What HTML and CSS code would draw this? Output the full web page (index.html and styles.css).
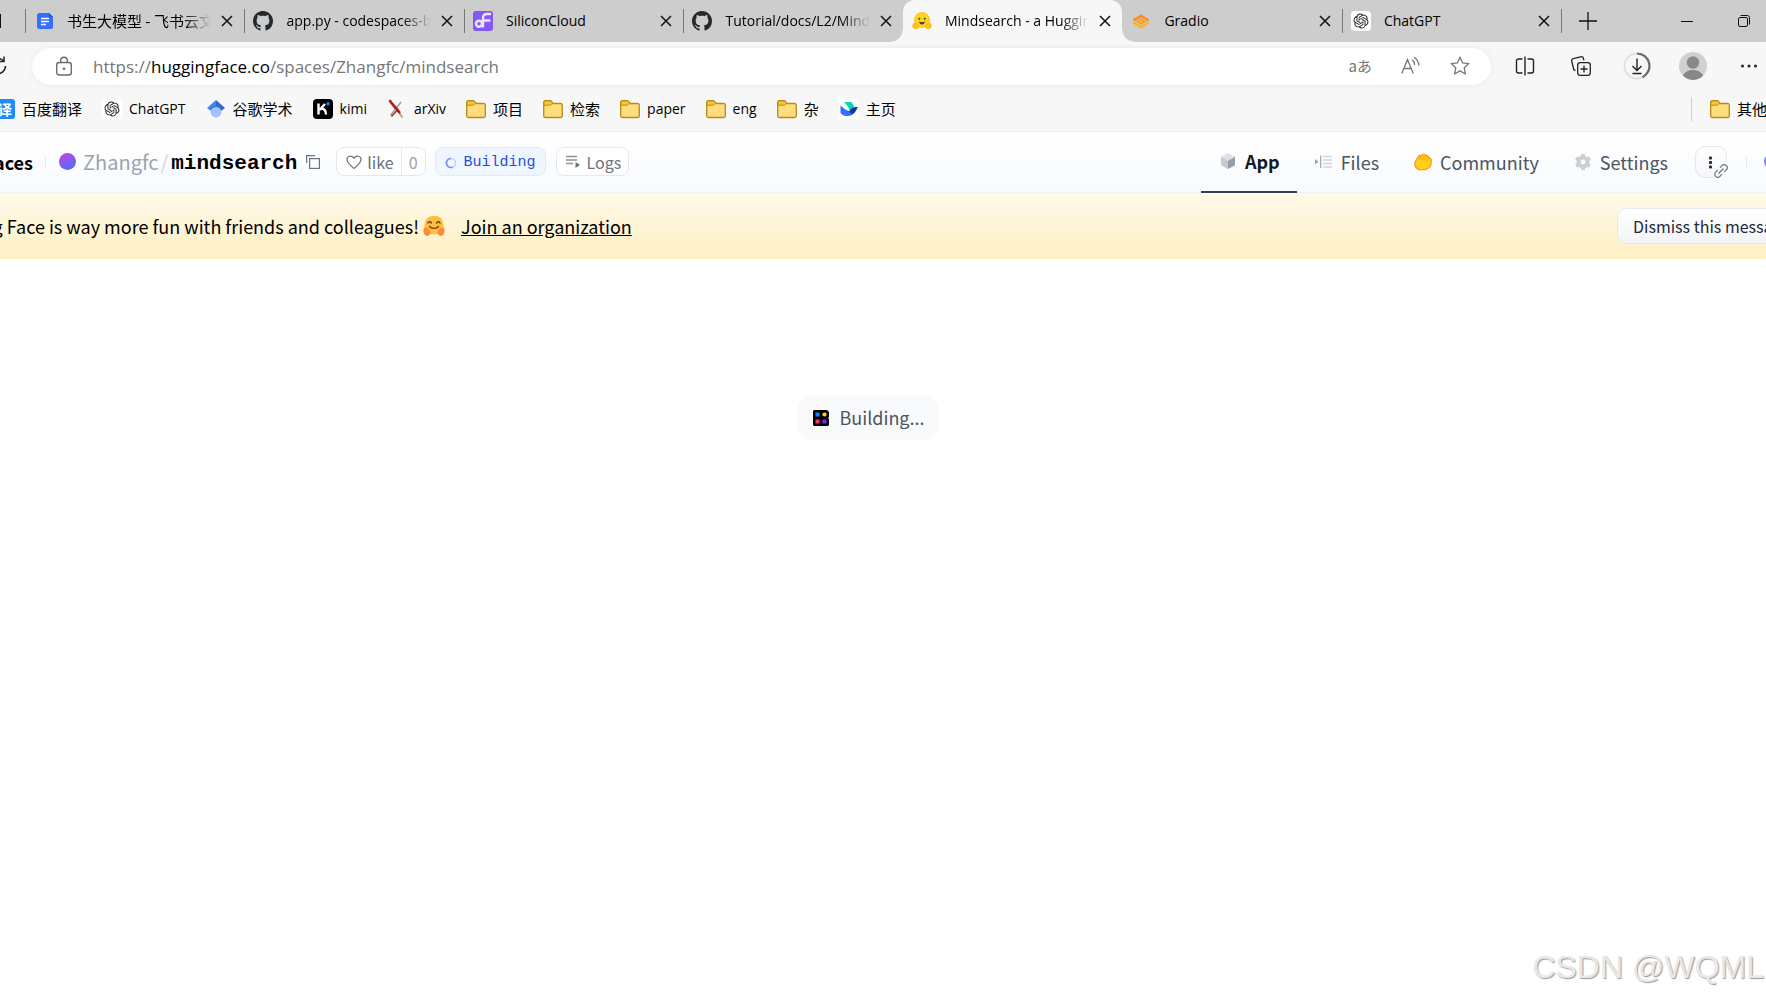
FILE: index.html
```html
<!DOCTYPE html>
<html lang="zh-CN">

<head>
    <meta charset="UTF-8">
    <title>Mindsearch - a Hugging Face Space by Zhangfc</title>
    <link rel="stylesheet" href="styles.css">
</head>

<body>
    <svg class="sprite" aria-hidden="true">
        <symbol id="github" viewBox="0 0 16 16">
            <path fill="#24292f" d="M8 0C3.58 0 0 3.58 0 8c0 3.54 2.29 6.53 5.47 7.59.4.07.55-.17.55-.38 0-.19-.01-.82-.01-1.49-2.01.37-2.53-.49-2.69-.94-.09-.23-.48-.94-.82-1.13-.28-.15-.68-.52-.01-.53.63-.01 1.08.58 1.23.82.72 1.21 1.87.87 2.33.66.07-.52.28-.87.51-1.07-1.78-.2-3.64-.89-3.64-3.95 0-.87.31-1.59.82-2.15-.08-.2-.36-1.02.08-2.12 0 0 .67-.21 2.2.82.64-.18 1.32-.27 2-.27s1.36.09 2 .27c1.53-1.04 2.2-.82 2.2-.82.44 1.1.16 1.92.08 2.12.51.56.82 1.27.82 2.15 0 3.07-1.87 3.75-3.65 3.95.29.25.54.73.54 1.48 0 1.07-.01 1.93-.01 2.2 0 .21.15.46.55.38A8.01 8.01 0 0 0 16 8c0-4.42-3.58-8-8-8z" />
        </symbol>
        <symbol id="openai" viewBox="0 0 32 32">
            <rect width="32" height="32" rx="6" fill="#fff" />
            <path transform="translate(4 4)" fill="#222" d="M22.282 9.821a5.985 5.985 0 0 0-.516-4.91 6.046 6.046 0 0 0-6.51-2.9A6.065 6.065 0 0 0 4.981 4.18a5.985 5.985 0 0 0-3.998 2.9 6.046 6.046 0 0 0 .743 7.097 5.98 5.98 0 0 0 .51 4.911 6.051 6.051 0 0 0 6.515 2.9A5.985 5.985 0 0 0 13.26 24a6.056 6.056 0 0 0 5.772-4.206 5.99 5.99 0 0 0 3.997-2.9 6.056 6.056 0 0 0-.747-7.073zM13.26 22.43a4.476 4.476 0 0 1-2.876-1.04l.141-.081 4.779-2.758a.795.795 0 0 0 .392-.681v-6.737l2.02 1.168a.071.071 0 0 1 .038.052v5.583a4.504 4.504 0 0 1-4.494 4.494zM3.6 18.304a4.47 4.47 0 0 1-.535-3.014l.142.085 4.783 2.759a.771.771 0 0 0 .78 0l5.843-3.369v2.332a.08.08 0 0 1-.033.062L9.74 19.95a4.5 4.5 0 0 1-6.14-1.646zM2.34 7.896a4.485 4.485 0 0 1 2.366-1.973V11.6a.766.766 0 0 0 .388.676l5.815 3.355-2.02 1.168a.076.076 0 0 1-.071 0l-4.83-2.786A4.504 4.504 0 0 1 2.34 7.872zm16.597 3.855l-5.833-3.387L15.119 7.2a.076.076 0 0 1 .071 0l4.83 2.791a4.494 4.494 0 0 1-.676 8.105v-5.678a.79.79 0 0 0-.407-.667zm2.01-3.023l-.141-.085-4.774-2.782a.776.776 0 0 0-.785 0L9.409 9.23V6.897a.066.066 0 0 1 .028-.061l4.83-2.787a4.5 4.5 0 0 1 6.68 4.66zm-12.64 4.135l-2.02-1.164a.08.08 0 0 1-.038-.057V6.075a4.5 4.5 0 0 1 7.375-3.453l-.142.08L8.704 5.46a.795.795 0 0 0-.393.681zm1.097-2.365l2.602-1.5 2.607 1.5v2.999l-2.597 1.5-2.607-1.5z" />
        </symbol>
        <symbol id="folder" viewBox="0 -1 20 20">
            <path d="M.7 4.2v11.6c0 1 .7 1.7 1.7 1.7h15.2c1 0 1.7-.7 1.7-1.7V5.2c0-1-.7-1.7-1.7-1.7H10L8.600 1.700C8.200 1 7.700.7 7 .7H2.400C1.400.7.7 1.400.7 2.400z" fill="#ffdc7c" stroke="#b98a16" stroke-width="1.300" />
            <path d="M1 5.200h5.500c.7 0 1.200-.2 1.700-.7L9.700 3.200 8.400 1.600C8 1 7.600.9 7 .9H2.400C1.500.9 1 1.500 1 2.400z" fill="#f6c834" stroke="#b98a16" />
        </symbol>
        <symbol id="close" viewBox="0 0 12 12">
            <path d="M1 1l10 10M11 1L1 11" stroke="#111" stroke-width="1.500" fill="none" />
        </symbol>
    </svg>

    <div class="tabs">
        <div class="tab-cut"><span></span></div>
        <div class="strip">
            <div class="tab">
                <svg class="icon" viewBox="-1 0 20 20"><path d="M4 2h10l4 4v10a2 2 0 0 1-2 2H4a2 2 0 0 1-2-2V4a2 2 0 0 1 2-2z" fill="#3370ff" /><path d="M14 2l4 4h-4z" fill="#1d53d6" /><path d="M6 7.500h8M6 10.500h8M6 13.500h5" stroke="#fff" stroke-width="1.300" /></svg>
                <span class="title zh faded">书生大模型 - 飞书云文档</span>
                <button class="close" aria-label="Close tab"><svg><use href="#close" /></svg></button>
            </div>
            <div class="tab">
                <svg class="icon"><use href="#github" /></svg>
                <span class="title faded">app.py - codespaces-blank</span>
                <button class="close" aria-label="Close tab"><svg><use href="#close" /></svg></button>
            </div>
            <div class="tab">
                <svg class="icon" viewBox="0 0 20 20"><rect width="20" height="20" rx="3" fill="#8358f6" /><g fill="none" stroke="#eee6ff" stroke-width="2.400" stroke-linecap="round"><circle cx="6" cy="12.700" r="3" /><path d="M10 15.500V7c0-2.700 1.500-4 4-4h3M11 9.500h5.500" /></g></svg>
                <span class="title">SiliconCloud</span>
                <button class="close" aria-label="Close tab"><svg><use href="#close" /></svg></button>
            </div>
            <div class="tab">
                <svg class="icon"><use href="#github" /></svg>
                <span class="title faded">Tutorial/docs/L2/MindSearch</span>
                <button class="close" aria-label="Close tab"><svg><use href="#close" /></svg></button>
            </div>
            <div class="tab active">
                <svg class="icon" viewBox="0 0 20 20"><circle cx="10" cy="9" r="7.600" fill="#ffd21e" stroke="#ffb000" stroke-width=".6" /><path d="M1.500 12.500c1.500-1 4 .5 5 2.500.5 2-1 2.800-3 2.800-2.800 0-3.600-3-2-5.300zM18.500 12.500c-1.500-1-4 .5-5 2.500-.5 2 1 2.800 3 2.800 2.800 0 3.600-3 2-5.300z" fill="#ffc21a" stroke="#ff9d0b" stroke-width=".5" /><circle cx="7.300" cy="7.700" r="1" fill="#3a3b45" /><circle cx="12.700" cy="7.700" r="1" fill="#3a3b45" /><path d="M7 10.500c1.800 1 4.200 1 6 0-.3 2-1.500 3-3 3s-2.700-1-3-3z" fill="#3a3b45" /></svg>
                <span class="title faded">Mindsearch - a Hugging Face</span>
                <button class="close" aria-label="Close tab"><svg><use href="#close" /></svg></button>
            </div>
            <div class="tab">
                <svg class="icon" viewBox="0 0 20 20"><g fill="none" stroke-width="2.600"><path d="M2.500 9.500L10 4.800l7.500 4.700" stroke="#ff8a1f" /><path d="M2.500 11.500l7.500 4.700 7.500-4.700" stroke="#ffb01f" /><path d="M6.500 10.500L10 8.300l3.500 2.200-3.500 2.200z" stroke="#ff9a1f" stroke-width="1.800" /></g></svg>
                <span class="title">Gradio</span>
                <button class="close" aria-label="Close tab"><svg><use href="#close" /></svg></button>
            </div>
            <div class="tab">
                <svg class="icon"><use href="#openai" /></svg>
                <span class="title">ChatGPT</span>
                <button class="close" aria-label="Close tab"><svg><use href="#close" /></svg></button>
            </div>
        </div>
        <button class="new-tab" aria-label="New tab"><svg viewBox="0 0 18 18"><path d="M9 0v18M0 9h18" stroke="#111" stroke-width="1.300" /></svg></button>
        <div class="window-buttons">
            <button aria-label="Minimize"><svg viewBox="0 0 12 12"><path d="M0 6.500h12" stroke="#111" /></svg></button>
            <button aria-label="Restore"><svg viewBox="0 0 12 12"><g fill="none" stroke="#111"><rect x=".5" y="2.500" width="9" height="9" rx="1.500" /><path d="M2.500.5H9.500a2 2 0 0 1 2 2v7" /></g></svg></button>
        </div>
    </div>

    <div class="toolbar">
        <button class="reload" aria-label="Reload"><svg viewBox="0 0 20 20"><path d="M17.500 10A7.500 7.500 0 1 1 15 4.500M16 .5V5.500H11" fill="none" stroke="#222" stroke-width="1.500" /></svg></button>
        <div class="address">
            <svg class="lock" viewBox="0 0 18 20"><g fill="none" stroke="#6b6b6b" stroke-width="1.400"><rect x="1.700" y="6.500" width="14.600" height="12.500" rx="2.500" /><path d="M5.700 6.500V4.500a3.300 3.300 0 0 1 6.600 0v2" /></g><circle cx="9" cy="12.700" r="1.300" fill="#6b6b6b" /></svg>
            <a class="url" href="#">https://<b>huggingface.co</b>/spaces/Zhangfc/mindsearch</a>
            <button class="translate">aあ</button>
            <button aria-label="Read aloud"><svg viewBox="0 0 20 20"><g fill="none" stroke="#767676" stroke-width="1.300" stroke-linecap="round"><path d="M1 17L6.500 3.500 12 17M3 12.500h7M11.500 4c1.300 1 2 2.500 2 4.500M13.500 1.500c2.500 1.800 4 4.300 4.300 7.500" /></g></svg></button>
            <button aria-label="Favorite"><svg viewBox="0 0 20 20"><path d="M10 1.200l2.600 5.700 6.200.7-4.600 4.200 1.300 6.200L10 14.900 4.500 18l1.300-6.200L1.200 7.600l6.200-.7z" fill="none" stroke="#767676" stroke-width="1.300" stroke-linejoin="round" /></svg></button>
        </div>
        <div class="actions">
            <button aria-label="Split screen"><svg viewBox="0 0 20 20"><path d="M7.500 3H3.500a2 2 0 0 0-2 2v10a2 2 0 0 0 2 2h4M12.500 3h4a2 2 0 0 1 2 2v10a2 2 0 0 1-2 2h-4M10 .5v19" fill="none" stroke="#222" stroke-width="1.400" /></svg></button>
            <button aria-label="Collections"><svg viewBox="0 0 20 20"><g fill="none" stroke="#222" stroke-width="1.300"><rect x="6.700" y="6.700" width="12.600" height="12.600" rx="2.500" /><path d="M13 9.500v7M9.500 13h7M4.500 14.500L2.800 13.700.8 5.500C.4 4 1 3 2.300 2.600L9.500.8c1.500-.4 2.500.2 2.900 1.500l.5 2" /></g></svg></button>
            <button class="big" aria-label="Downloads"><svg viewBox="0 0 28 28"><circle cx="14" cy="14" r="12.500" fill="none" stroke="#e0e0e0" stroke-width="2" /><path d="M14 1.500A12.500 12.500 0 0 1 19.500 25.200" fill="none" stroke="#6b6b6b" stroke-width="2.200" /><path d="M14 6.500v12M9.500 14l4.500 4.500 4.500-4.500M9.500 21.500h9" fill="none" stroke="#222" stroke-width="1.400" /></svg></button>
            <button class="big" aria-label="Profile"><svg viewBox="0 0 28 28"><circle cx="14" cy="14" r="14" fill="#d2d0ce" /><circle cx="14" cy="10.500" r="6.200" fill="#8a8886" /><path d="M3.800 23.600C6 19.500 10 18 14 18s8 1.500 10.200 5.600A14 14 0 0 1 3.800 23.600z" fill="#8a8886" /></svg></button>
            <button aria-label="More"><svg viewBox="0 0 20 20"><g fill="#222"><circle cx="3.500" cy="10" r="1.500" /><circle cx="10" cy="10" r="1.500" /><circle cx="16.500" cy="10" r="1.500" /></g></svg></button>
        </div>
    </div>

    <div class="bookmarks">
        <a class="zh first" href="#"><span class="fanyi">译</span>百度翻译</a>
        <a href="#"><svg><use href="#openai" /></svg>ChatGPT</a>
        <a class="zh" href="#"><svg viewBox="0 0 20 20"><path d="M10 1L1 9l4 3 5-4z" fill="#4285f4" /><path d="M10 1l9 8-4 3-5-4z" fill="#356ac3" /><path d="M4.500 11C5 8.500 7 7 10 7s5 1.500 5.500 4z" fill="#3b72d6" /><circle cx="10" cy="13.300" r="5.300" fill="#a0c3ff" /></svg>谷歌学术</a>
        <a href="#"><svg viewBox="0 0 20 20"><rect width="20" height="20" rx="4" fill="#000" /><path d="M5.500 4.500v11M12 5l-5.500 6M8 9.500c3 0 5 1.500 5 6" stroke="#fff" stroke-width="2.400" fill="none" /><circle cx="15" cy="4.800" r="1.700" fill="#1783ff" /></svg>kimi</a>
        <a href="#"><svg viewBox="0 0 20 20"><path d="M14 3L3.500 16.500M9 9.500l6.500 9" stroke="#aaa297" stroke-width="1.800" /><path d="M2.500 1.200C5 5.500 8 7.500 10 10.500L13 14" stroke="#b31b1b" stroke-width="2.600" fill="none" /><path d="M11.500 10L4.500 17.500" stroke="#b31b1b" stroke-width="1.300" /></svg>arXiv</a>
        <a class="zh" href="#"><svg><use href="#folder" /></svg>项目</a>
        <a class="zh" href="#"><svg><use href="#folder" /></svg>检索</a>
        <a href="#"><svg><use href="#folder" /></svg>paper</a>
        <a href="#"><svg><use href="#folder" /></svg>eng</a>
        <a class="zh" href="#"><svg><use href="#folder" /></svg>杂</a>
        <a class="zh" href="#"><svg viewBox="0 0 20 20"><rect width="20" height="20" rx="2" fill="#fff" /><path d="M5 3h7c2 1.500 3 4 3 6l-4 3C9.500 8 7.500 5 5 3z" fill="#00d6b9" /><path d="M1.500 6.500C5 10 8.500 12 12 12.500l4 .5c-2 3-4.500 4-7.500 4-4 0-7-2-7-3.500z" fill="#3370ff" /><path d="M10 12.500c2-2.500 3-5 9-4.500-1.500 2-2 5.500-5 6.500-2 .5-3-1-4-2z" fill="#133c9a" /></svg>主页</a>
        <div class="others"><a class="zh" href="#"><svg><use href="#folder" /></svg>其他收藏夹</a></div>
    </div>

    <header class="space-header">
        <a class="spaces" href="#">Spaces</a>
        <span class="divider"></span>
        <span class="avatar"></span>
        <a class="owner" href="#">Zhangfc</a>
        <span class="slash">/</span>
        <a class="name" href="#">mindsearch</a>
        <button class="copy" aria-label="Copy name"><svg viewBox="0 0 14 14"><g fill="none" stroke="#6b7280" stroke-width="1.200"><rect x="3.600" y="3.600" width="9.800" height="9.800" /><path d="M.6 8V.6H9" /></g></svg></button>
        <div class="likes">
            <button><svg viewBox="0 0 16 16"><path d="M8 14.500C5 12 1 9 1 5.500 1 1.800 5.700 1 8 4.200c2.300-3.200 7-2.400 7 1.300C15 9 11 12 8 14.500z" fill="none" stroke="#6b7280" stroke-width="1.200" /></svg>like</button>
            <button class="count">0</button>
        </div>
        <div class="status"><svg viewBox="0 0 12 12"><circle cx="6" cy="6" r="4.500" fill="none" stroke="#c3d5fb" stroke-width="1.600" /><path d="M7.500 10.200A4.500 4.500 0 1 1 6 1.500" fill="none" stroke="#6f93ef" stroke-width="1.600" /></svg>Building</div>
        <button class="logs"><svg viewBox="0 0 16 16"><path d="M1 2.500h11M1 6h11M1 9.500h7" stroke="#8b919d" stroke-width="1.300" /><path d="M10.500 8l4.500 3-4.500 3z" fill="#6b7280" /></svg>Logs</button>

        <nav>
            <a class="current" href="#"><svg viewBox="0 0 18 18"><path d="M9 1L2 4.700 9 8.800l7-4.100z" fill="#dfe1e6" /><path d="M2 4.700v8.500L9 17V8.800z" fill="#c7cad1" /><path d="M16 4.700v8.500L9 17V8.800z" fill="#989daa" /></svg>App</a>
            <a href="#"><svg viewBox="0 0 18 18"><path d="M8 3.500h9M8 7h9M8 10.500h9M8 14h9" stroke="#d1d5db" stroke-width="1.500" /><path d="M5.700 2.500v12.500" stroke="#9ca3af" stroke-width="1.200" /><path d="M0 6l3.500 2.800L0 11.500z" fill="#9ca3af" /></svg>Files</a>
            <a href="#"><svg viewBox="0 0 18 18"><path d="M1 12.500C.3 10.500 1 9 2 7.500L4.500 3.300C5.300 2 6.800 2.300 6.700 3.600L9 1.500c1.200-.9 2.300.2 1.700 1.400 1.200-1.400 2.900-.8 2.400.8 1.400-.9 2.600.2 2.100 1.700 1.500-.2 2.400.8 1.900 2.200.5 3.200-.2 5.500-2.300 7.200-2.500 2-6 2.300-9 1.800-2.500-.4-4-1.800-4.800-4.100z" fill="#ffd21e" stroke="#ff9d0b" stroke-width="1.300" /><path d="M10.700 2.900L7.800 6.800M13.100 3.700L9.800 8M15.200 5.400L11.800 9.500M6.700 3.600L5.500 7" stroke="#ff9d0b" fill="none" /></svg>Community</a>
            <a href="#"><svg viewBox="0 0 18 18"><circle cx="9" cy="9" r="4.400" fill="none" stroke="#cbced5" stroke-width="4" /><path d="M9 1v3M9 14v3M2.100 5l2.600 1.500M13.300 11.500l2.600 1.500M2.100 13l2.600-1.500M13.300 6.500l2.600-1.500" stroke="#cbced5" stroke-width="4" /></svg>Settings</a>
            <button class="more" aria-label="More options">
                <svg viewBox="0 0 16 16"><g fill="#1f2937"><rect x="6" y="2.500" width="3" height="3" rx="1" /><rect x="6" y="7" width="3" height="3" rx="1" /><rect x="6" y="11.500" width="3" height="3" rx="1" /></g></svg>
                <svg class="link" viewBox="0 0 16 16"><g fill="none" stroke="#6b7280" stroke-width="1.200" transform="rotate(-45 8 8)"><path d="M6.500 5H3.500a3 3 0 0 0 0 6h3M9.500 5h3a3 3 0 0 1 0 6h-3M4.500 8h7" /></g></svg>
            </button>
            <span class="divider"></span>
            <span class="avatar user"></span>
        </nav>
    </header>

    <div class="banner">
        <p>Hugging Face is way more fun with friends and colleagues!</p>
        <svg viewBox="0 0 22 22"><path d="M11 .8c6 0 9.500 4.200 9.500 10 0 6-3.500 8.500-9.500 8.500S1.500 17 1.500 10.800C1.500 5 5 .8 11 .8z" fill="#ffbe3b" /><path d="M1 13c2-1.200 4.500.3 6 3 1 2.500 0 4.500-2.500 5C1.500 21.200-.5 17 1 13zM21 13c-2-1.200-4.500.3-6 3-1 2.500 0 4.500 2.500 5 3 .2 5-4 3.500-8z" fill="#ff8a3c" /><path d="M5 8c.8-1.600 2.600-1.600 3.400 0M13.600 8c.8-1.600 2.600-1.600 3.400 0M6.500 11.500c2 2.500 7 2.500 9 0" fill="none" stroke="#5b3b24" stroke-width="1.400" stroke-linecap="round" /></svg>
        <a href="#">Join an organization</a>
        <div class="dismiss"><button>Dismiss this message</button></div>
    </div>

    <main>
        <div class="building">
            <svg viewBox="0 0 16 16"><path d="M1 0h13l2 2v5l-1 1 1 1v6l-1 1H1l-1-1V1z" fill="#000" /><rect x="2.500" y="2.500" width="4" height="4" fill="#0a84ff" /><circle cx="11.500" cy="4.500" r="2.100" fill="#ffd21e" /><rect x="2.500" y="9.500" width="4" height="4" fill="#ff3270" /><rect x="9.500" y="9.500" width="4" height="4" fill="#861fff" /></svg>
            <span>Building...</span>
        </div>
    </main>

    <div class="watermark">CSDN @WQML</div>
</body>

</html>
```

FILE: styles.css
```css
* {
    box-sizing: border-box;
}

body {
    margin: 0;
    min-height: 100vh;
    overflow: hidden;
    position: relative;
    background-color: #fff;
    font-family: "Noto Sans CJK SC", sans-serif;
    font-size: 16px;
    color: #000;
}

button {
    padding: 0;
    border: 0;
    background: none;
    font: inherit;
    color: inherit;
    cursor: pointer;
}

a {
    color: inherit;
    text-decoration: none;
}

svg {
    display: block;
    flex: none;
}

.sprite {
    display: none;
}

/* browser tabs */
.tabs {
    display: flex;
    align-items: center;
    height: 42px;
    background-color: #cdcdcd;
    font-family: "Open Sans", "Noto Sans CJK SC", sans-serif;
    font-size: 14px;
}

.tab-cut {
    width: 25px;
    flex: none;
}

.tab-cut span {
    display: block;
    width: 1px;
    height: 14px;
    background-color: #111;
}

.strip {
    display: flex;
    width: 87%;
}

.tab {
    display: flex;
    align-items: center;
    flex: 1;
    min-width: 0;
    height: 42px;
    padding: 0 7px 0 9px;
    background: linear-gradient(#777, #777) 0 center / 1px 24px no-repeat;
}

.tab.active {
    position: relative;
    border-radius: 12px 12px 0 0;
    background: #f7f7f7;
}

.tab.active::before,
.tab.active::after {
    content: "";
    position: absolute;
    bottom: 0;
    width: 12px;
    height: 12px;
}

.tab.active::before {
    right: 100%;
    background: radial-gradient(circle at 0 0, transparent 11px, #f7f7f7 12px);
}

.tab.active::after {
    left: 100%;
    background: radial-gradient(circle at 100% 0, transparent 11px, #f7f7f7 12px);
}

.tab.active + .tab {
    background: none;
}

.tab .icon {
    width: 20px;
    height: 20px;
    margin-right: 13px;
}

.tab .title {
    flex: 1;
    padding-bottom: 2px;
    overflow: hidden;
    white-space: nowrap;
}

.zh {
    font-family: "Noto Sans CJK SC", sans-serif;
    font-size: 15px;
}

.tab .faded {
    -webkit-mask-image: linear-gradient(to right, #000 80%, transparent);
    mask-image: linear-gradient(to right, #000 80%, transparent);
}

.close {
    width: 20px;
    margin-left: 6px;
    padding: 4px;
}

.close svg {
    width: 12px;
    height: 12px;
}

.new-tab {
    padding: 3px 0 3px 17px;
    border-left: 1px solid #777;
}

.new-tab svg {
    width: 18px;
    height: 18px;
}

.window-buttons {
    display: flex;
    gap: 45px;
    margin-left: auto;
    padding-right: 16px;
}

.window-buttons svg {
    width: 12px;
    height: 12px;
}

/* address bar */
.toolbar {
    display: flex;
    align-items: center;
    height: 48px;
    background-color: #f7f7f7;
}

.reload {
    display: flex;
    justify-content: flex-end;
    width: 8px;
    margin-right: 24px;
}

.toolbar svg {
    width: 20px;
    height: 20px;
}

.address {
    display: flex;
    align-items: center;
    flex: 1;
    gap: 29px;
    height: 37px;
    padding: 0 21px 0 23px;
    border-radius: 19px;
    background-color: #fff;
    box-shadow: 0 0 5px #e6e6e6;
}

.address .lock {
    width: 18px;
}

.url {
    flex: 1;
    margin-left: -9px;
    font-family: "Open Sans", sans-serif;
    font-size: 17px;
    color: #767676;
}

.url b {
    font-weight: normal;
    color: #000;
}

.translate {
    color: #767676;
    font-size: 15px;
    line-height: 20px;
}

.actions {
    display: flex;
    align-items: center;
    gap: 36px;
    padding: 0 7px 0 24px;
}

.actions .big svg {
    width: 28px;
    height: 28px;
    margin: 0 -4px;
}

/* bookmarks bar */
.bookmarks {
    display: flex;
    align-items: center;
    gap: 20px;
    height: 42px;
    padding-bottom: 4px;
    border-bottom: 1px solid #ebebeb;
    background-color: #f7f7f7;
    font-family: "Open Sans", sans-serif;
    font-size: 14px;
    line-height: 24px;
}

.bookmarks a {
    display: flex;
    align-items: center;
    gap: 7px;
    white-space: nowrap;
}

.bookmarks svg {
    width: 20px;
    height: 20px;
}

.bookmarks .first {
    margin-left: -5px;
}

.fanyi {
    width: 20px;
    height: 20px;
    border-radius: 3px;
    background-color: #1a8cff;
    color: #fff;
    font-size: 14px;
    font-weight: bold;
    line-height: 20px;
    text-align: center;
}

.others {
    width: 75px;
    margin-left: auto;
    padding-left: 18px;
    border-left: 1px solid #ccc;
    overflow: hidden;
}

/* space header */
.space-header {
    display: flex;
    align-items: center;
    height: 61px;
    padding-bottom: 1px;
    border-bottom: 1px solid #f0f1f4;
    background: linear-gradient(#fff, #f8fafe);
    color: #6b7280;
}

.spaces {
    display: flex;
    justify-content: flex-end;
    width: 33px;
    overflow: hidden;
    color: #000;
    font-size: 18px;
    font-weight: bold;
}

.divider {
    width: 1px;
    height: 10px;
    margin-left: 12px;
    background-color: #e5e7eb;
}

.avatar {
    flex: none;
    width: 17px;
    height: 17px;
    margin: 0 7px 0 13px;
    border-radius: 50%;
    background: linear-gradient(160deg, #d43df0, #6366f1 70%);
}

.owner {
    color: #9ca3af;
    font-size: 20px;
}

.slash {
    margin: 0 3px 0 2px;
    color: #d1d5db;
    font-size: 20px;
}

.name {
    padding-top: 3px;
    color: #000;
    font-family: "Liberation Mono", monospace;
    font-size: 21px;
    font-weight: bold;
}

.copy svg {
    width: 14px;
    height: 14px;
    margin: 0 16px 0 9px;
}

.likes,
.logs,
.status {
    display: flex;
    align-items: center;
    height: 29px;
    border: 1px solid #e5e7eb;
    border-radius: 8px;
    background-color: #fff;
}

.likes button {
    display: flex;
    align-items: center;
    gap: 5px;
    height: 27px;
    padding: 0 7px 0 9px;
}

.likes svg,
.logs svg {
    width: 16px;
    height: 16px;
}

.likes .count {
    padding: 0 7px;
    border-left: 1px solid #e5e7eb;
    color: #9ca3af;
}

.status {
    gap: 7px;
    margin: 0 10px 0 9px;
    padding: 2px 9px 0;
    border-color: #dbeafe;
    background-color: #eff6ff;
    color: #1d4ed8;
    font-family: "Liberation Mono", monospace;
    font-size: 15px;
}

.status svg {
    width: 12px;
    height: 12px;
}

.logs {
    gap: 6px;
    padding: 0 7px 0 8px;
}

.space-header nav {
    display: flex;
    align-items: center;
    align-self: stretch;
    margin-left: auto;
}

.space-header nav a {
    display: flex;
    align-items: center;
    gap: 8px;
    height: 60px;
    padding: 0 17px 0 18px;
    color: #4b5563;
    font-size: 18px;
}

.space-header nav a svg {
    width: 18px;
    height: 18px;
}

.space-header nav .current {
    height: 61px;
    margin-bottom: -1px;
    border-bottom: 2px solid #374151;
    color: #111827;
    font-weight: bold;
}

.more {
    position: relative;
    display: flex;
    align-items: center;
    justify-content: center;
    width: 32px;
    height: 32px;
    margin: 0 7px 0 10px;
    border: 1px solid #e5e7eb;
    border-radius: 10px;
    background: linear-gradient(#fff, #f5f6f8);
}

.more svg {
    width: 16px;
    height: 16px;
}

.more .link {
    position: absolute;
    right: -3px;
    bottom: -2px;
    background-color: #f9fafc;
}

.user {
    margin: 0 -15px 0 17px;
    background: #8183f4;
}

/* organization banner */
.banner {
    display: flex;
    align-items: center;
    height: 66px;
    padding-bottom: 1px;
    background: linear-gradient(#fff9e8, #fef0c3);
    font-size: 18px;
    white-space: nowrap;
}

.banner p {
    display: flex;
    justify-content: flex-end;
    width: 419px;
    margin: 0;
    overflow: hidden;
}

.banner svg {
    width: 22px;
    height: 22px;
    margin: 0 16px 0 4px;
}

.banner a {
    text-decoration: underline;
}

.dismiss {
    width: 149px;
    margin-left: auto;
    overflow: hidden;
}

.dismiss button {
    height: 36px;
    padding: 0 15px;
    border: 1px solid #e5e7eb;
    border-radius: 9px;
    background: linear-gradient(#fff, #f3f4f6);
    color: #1f2937;
    font-size: 16px;
}

main {
    display: flex;
    justify-content: center;
    padding: 137px 30px 0 0;
}

.building {
    display: flex;
    align-items: center;
    gap: 10px;
    height: 44px;
    padding: 0 14px 0 16px;
    border-radius: 14px;
    background-color: #f9fafb;
    color: #4b5563;
    font-size: 18px;
}

.building span {
    padding-bottom: 2px;
}

.building svg {
    width: 16px;
    height: 16px;
}

.watermark {
    position: absolute;
    right: 2px;
    bottom: 11px;
    color: #e8e8e8;
    font-family: "Liberation Sans", sans-serif;
    font-size: 32px;
    text-shadow: 1px 1px 1px #999;
}
```
